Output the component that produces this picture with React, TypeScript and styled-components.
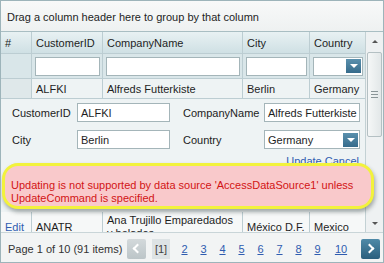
import React from 'react'
import styled, { createGlobalStyle } from 'styled-components'

const GlobalStyle = createGlobalStyle`
  body {
    margin: 0;
    background: #fff;
  }
  * {
    box-sizing: border-box;
  }
`

const COLS = '31px 71px 140px 67px 55px'

const Frame = styled.div`
  width: 384px;
  height: 263px;
  border: 1px solid #9db4ba;
  background: #eef3f4;
  font-family: 'Liberation Sans', Arial, sans-serif;
  font-size: 11px;
  color: #1e1e1e;
  overflow: hidden;
  display: flex;
  flex-direction: column;
  white-space: nowrap;
`

const GroupPanel = styled.div`
  height: 31px;
  flex: none;
  display: flex;
  align-items: center;
  padding: 2px 0 0 6px;
  background: linear-gradient(#f8f9f9, #eef1f1);
  border-bottom: 1px solid #a9bec3;
`

const Body = styled.div`
  height: 200px;
  flex: none;
  display: flex;
  overflow: hidden;
`

const Table = styled.div`
  width: 364px;
  flex: none;
  display: flex;
  flex-direction: column;
`

const Row = styled.div<{ $h: number; $bg: string }>`
  display: grid;
  grid-template-columns: ${COLS};
  height: ${(p) => p.$h}px;
  flex: none;
  background: ${(p) => p.$bg};
  border-bottom: 1px solid #bccdd2;
`

const HeaderRow = styled(Row)`
  background: linear-gradient(#e8f1f3, #cfe0e4);
`

const LastRow = styled(Row)`
  border-bottom: none;
`

const Cell = styled.div<{ $bg?: string }>`
  border-right: 1px solid #bccdd2;
  display: flex;
  align-items: center;
  padding: 0 4px;
  overflow: hidden;
  background: ${(p) => p.$bg || 'transparent'};
  &:last-child {
    border-right: none;
  }
`

const FilterCell = styled(Cell)`
  padding: 0 2px 0 3px;
`

const TextBox = styled.div`
  height: 19px;
  width: 100%;
  background: #fff;
  border: 1px solid #a4b5b9;
  display: flex;
  align-items: center;
  padding: 0 3px;
  overflow: hidden;
`

const SelectBox = styled(TextBox)`
  justify-content: space-between;
  padding: 0 1px 0 3px;
`

const DropBtn = styled.span`
  width: 15px;
  height: 14px;
  background: linear-gradient(#5a90ad, #356b8b);
  display: flex;
  align-items: center;
  justify-content: center;
  &::after {
    content: '';
    border-left: 4px solid transparent;
    border-right: 4px solid transparent;
    border-top: 4px solid #fff;
  }
`

const EditForm = styled.div`
  flex: none;
  padding: 4px 0 3px;
  background: #eef3f4;
`

const FormGrid = styled.div`
  display: grid;
  grid-template-columns: 65px 93px 13px 81px 96px;
  grid-auto-rows: 19px;
  row-gap: 8px;
  padding-left: 11px;
  align-items: center;
`

const Label = styled.span`
  color: #222;
`

const Actions = styled.div`
  display: flex;
  justify-content: flex-end;
  gap: 3px;
  padding-right: 6px;
  margin-top: 6px;
  height: 14px;
`

const LinkText = styled.span`
  color: #2f5cb0;
  text-decoration: underline;
`

const ErrorBox = styled.div`
  position: relative;
  z-index: 2;
  margin: -6px -9px 0 1px;
  height: 46px;
  border: 3px solid #f2f23c;
  border-radius: 16px;
  background: #f9c9cb;
  box-shadow: 1px 3px 4px rgba(60, 70, 70, 0.45);
  color: #d21414;
  line-height: 13px;
  padding: 13px 6px 0 6px;
`

const EditLink = styled(LinkText)`
  text-decoration: none;
`

const WrapCell = styled(Cell)`
  white-space: normal;
  line-height: 13px;
`

const ScrollBar = styled.div`
  width: 18px;
  flex: none;
  display: flex;
  flex-direction: column;
  background: #eef1f2;
  border-left: 1px solid #c3d1d4;
`

const ArrowBtn = styled.div<{ $down?: boolean }>`
  height: 18px;
  flex: none;
  display: flex;
  align-items: center;
  justify-content: center;
  &::after {
    content: '';
    border-left: 3px solid transparent;
    border-right: 3px solid transparent;
    ${(p) => (p.$down ? 'border-top: 3px solid #555;' : 'border-bottom: 3px solid #555;')}
  }
`

const Track = styled.div`
  flex: 1;
  padding: 2px 1px 0;
`

const Thumb = styled.div`
  height: 85px;
  border: 1px solid #b4c0c3;
  border-radius: 2px;
  background: linear-gradient(90deg, #f5f7f7, #e2e7e8);
  display: flex;
  align-items: center;
  justify-content: center;
`

const Grip = styled.div`
  width: 7px;
  height: 7px;
  background: repeating-linear-gradient(#8a9598 0 1px, transparent 1px 3px);
`

const Pager = styled.div`
  height: 30px;
  flex: none;
  display: flex;
  align-items: center;
  padding: 2px 0 0 7px;
  background: #f2f4f4;
  border-top: 1px solid #c9d5d8;
  color: #333;
`

const PageInfo = styled.span`
  width: 119px;
  flex: none;
`

const NavBtn = styled.div<{ $active?: boolean }>`
  width: 19px;
  height: 20px;
  flex: none;
  display: flex;
  align-items: center;
  justify-content: center;
  border-radius: 2px;
  background: ${(p) => (p.$active ? 'linear-gradient(#4f8aa8, #2b5f7d)' : 'linear-gradient(#d3d9db, #bcc5c8)')};
  &::after {
    content: '';
    width: 5px;
    height: 5px;
    border-top: 2px solid #fff;
    border-right: 2px solid #fff;
    transform: ${(p) => (p.$active ? 'translateX(-1px) rotate(45deg)' : 'translateX(1px) rotate(-135deg)')};
  }
`

const CurrentPage = styled.span`
  width: 18px;
  height: 20px;
  margin: 0 5px 0 6px;
  display: flex;
  align-items: center;
  justify-content: center;
  background: #dde3e5;
  color: #444;
`

const PageLink = styled.span<{ $w?: number }>`
  width: ${(p) => p.$w || 19}px;
  text-align: center;
  color: #2f5cb0;
  text-decoration: underline;
`

const pages = ['2', '3', '4', '5', '6', '7', '8', '9', '10']

export default function App() {
  return (
    <>
      <GlobalStyle />
      <Frame>
        <GroupPanel>Drag a column header here to group by that column</GroupPanel>
        <Body>
          <Table>
            <HeaderRow $h={22} $bg="#dbe8eb">
              <Cell>#</Cell>
              <Cell>CustomerID</Cell>
              <Cell>CompanyName</Cell>
              <Cell>City</Cell>
              <Cell>Country</Cell>
            </HeaderRow>
            <Row $h={25} $bg="#d9e6e9">
              <Cell />
              <FilterCell>
                <TextBox />
              </FilterCell>
              <FilterCell>
                <TextBox />
              </FilterCell>
              <FilterCell>
                <TextBox />
              </FilterCell>
              <FilterCell>
                <SelectBox>
                  <span />
                  <DropBtn />
                </SelectBox>
              </FilterCell>
            </Row>
            <Row $h={20} $bg="#eef3f4">
              <Cell $bg="#dfe8ea" />
              <Cell>ALFKI</Cell>
              <Cell>Alfreds Futterkiste</Cell>
              <Cell>Berlin</Cell>
              <Cell>Germany</Cell>
            </Row>
            <EditForm>
              <FormGrid>
                <Label>CustomerID</Label>
                <TextBox>ALFKI</TextBox>
                <span />
                <Label>CompanyName</Label>
                <TextBox>Alfreds Futterkiste</TextBox>
                <Label>City</Label>
                <TextBox>Berlin</TextBox>
                <span />
                <Label>Country</Label>
                <SelectBox>
                  Germany
                  <DropBtn />
                </SelectBox>
              </FormGrid>
              <Actions>
                <LinkText>Update</LinkText>
                <LinkText>Cancel</LinkText>
              </Actions>
              <ErrorBox>
                Updating is not supported by data source 'AccessDataSource1' unless
                <br />
                UpdateCommand is specified.
              </ErrorBox>
            </EditForm>
            <LastRow $h={30} $bg="#f6f8f8">
              <WrapCell>
                <EditLink>Edit</EditLink>
              </WrapCell>
              <WrapCell>ANATR</WrapCell>
              <WrapCell>Ana Trujillo Emparedados y helados</WrapCell>
              <WrapCell>México D.F.</WrapCell>
              <WrapCell>Mexico</WrapCell>
            </LastRow>
          </Table>
          <ScrollBar>
            <ArrowBtn />
            <Track>
              <Thumb>
                <Grip />
              </Thumb>
            </Track>
            <ArrowBtn $down />
          </ScrollBar>
        </Body>
        <Pager>
          <PageInfo>Page 1 of 10 (91 items)</PageInfo>
          <NavBtn />
          <CurrentPage>[1]</CurrentPage>
          {pages.map((p) => (
            <PageLink key={p} $w={p === '10' ? 28 : 19}>
              {p}
            </PageLink>
          ))}
          <NavBtn $active style={{ marginLeft: 6 }} />
        </Pager>
      </Frame>
    </>
  )
}
